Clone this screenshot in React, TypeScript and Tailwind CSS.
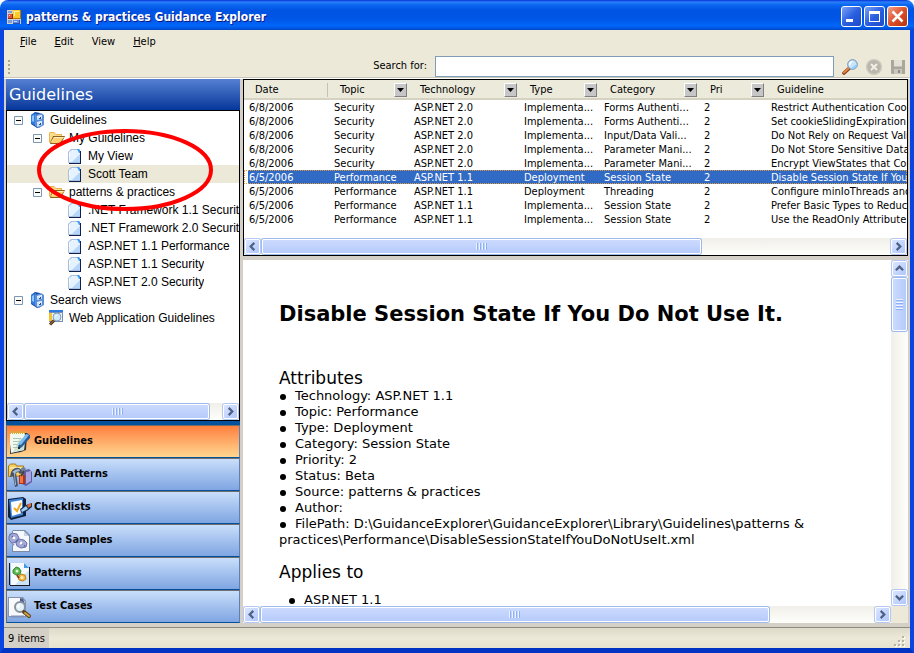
import { useState, type ReactNode } from 'react';
import clsx from 'clsx';

type IconProps = { className?: string };

function AppIcon() {
  return (
    <svg className="h-4 w-4" viewBox="0 0 16 16">
      <path fill="#d4d0c8" d="M0 1h14v14H0z" />
      <path fill="#8b2a1c" d="M1 5h5v5H1z" />
      <path fill="#e0533c" d="M1 5h4v4H1z" />
      <path fill="#ffd9cf" d="M2 6h1v1H2z" />
      <path fill="#7d9fd8" d="M1 2h4v2H1zM1 11h4v3H1z" />
      <path fill="#b97a00" d="M6 1h8v9H6z" />
      <path fill="#ffc928" d="M6 1h7v8H6z" />
      <path fill="#fff2a8" d="M7 2h5v1H7zM7 3h1v4H7z" />
      <path fill="#2b4fa8" d="M6 11h7v4H6z" />
      <path fill="#5c8cf0" d="M6 11h6v3H6z" />
      <path fill="#bcd3ff" d="M7 12h3v1H7z" />
    </svg>
  );
}

function CabinetIcon() {
  return (
    <svg className="h-4 w-4 shrink-0" viewBox="0 0 16 16">
      <path fill="#174a9e" d="M1 3 5 0l5 1v14l-3 1-6-4z" />
      <path fill="#2f7fe2" d="M1 3l5-2v13l-5-3z" />
      <path fill="#8cc6fb" d="M2 4l2-1v7l-2-1z" />
      <path fill="#5d8fd6" d="M5 3l6-2 3 2v10l-5 3-4-2z" />
      <path fill="#c9defa" d="M7 4l5-1v4L7 8zM7 10l5-1v4l-5 2z" />
      <path fill="#e9f3ff" d="M7 4l5-1v1L7 5zM7 10l5-1v1l-5 1z" />
      <path fill="#234f94" d="M9 5h2v2H9zM9 11h2v2H9z" />
      <path fill="#fff" d="M9 5h1v1H9zM9 11h1v1H9z" />
    </svg>
  );
}

function FolderIcon() {
  return (
    <svg className="h-4 w-4 shrink-0" viewBox="0 0 16 16">
      <path fill="#e9b64c" d="M0 3l1-1h4l2 2h6v3l-3 6H1l-1-1z" />
      <path fill="#f9dc8c" d="M1 3h4l2 2h5v2H4l-3 4z" />
      <path fill="#8d5f1b" d="M4 6h12l-4 8H1z" />
      <path fill="#fbd071" d="M5 7h10l-4 6H2z" />
      <path fill="#fff1bd" d="M5 7h10l-1 1H5l-2 4H2z" />
    </svg>
  );
}

function PageIcon() {
  return (
    <svg className="h-4 w-4 shrink-0" viewBox="0 0 16 16">
      <path fill="#12204f" d="M12 3h1v13H1v-1h11z" />
      <path fill="#a9bfe0" d="M3 1h7l2 2v12H0V4z" />
      <path fill="#e6f2ff" d="M4 2h6l2 2v10H1V4z" />
      <path fill="#b4d6fa" d="M12 6v8H4z" />
      <path fill="#3d9cf2" d="M9 1h2l1 1v3h-1z" />
      <path fill="#fff" d="M4 2h1v1H4zM1 5h1v4H1z" />
    </svg>
  );
}

function SearchViewIcon() {
  return (
    <svg className="h-4 w-4 shrink-0" viewBox="0 0 16 16">
      <path fill="#7790b8" d="M0 0h14v12H0z" />
      <path fill="#f4f4ee" d="M1 3h12v8H1z" />
      <path fill="#2d7be0" d="M0 0h14v2H0z" />
      <path fill="#f2c230" d="M0 3h3v8H0z" />
      <circle cx="8" cy="7" r="4" fill="#cfe9fb" stroke="#7f9fbf" />
      <path stroke="#fff" d="M6 6.500 8 5" />
      <path stroke="#3b2a18" strokeWidth="3" d="M5 10.500 1 14.500" />
      <path stroke="#d98c2f" strokeWidth="1" d="M5 10.500 1 14.500" />
    </svg>
  );
}

function MagnifierIcon() {
  return (
    <svg className="h-4 w-4" viewBox="0 0 16 16">
      <path stroke="#7a3b1c" strokeWidth="3.600" strokeLinecap="round" d="M7 9.500 2 14" />
      <path stroke="#e8833a" strokeWidth="2.200" strokeLinecap="round" d="M7 9 2 13.500" />
      <circle cx="10.500" cy="5.500" r="4.800" fill="#c6e4fb" stroke="#6d8db5" />
      <path fill="#fff" d="M7 5q0-3 5-3Q8 4 8 8z" />
      <path fill="none" stroke="#8fd0ff" strokeWidth="1.500" d="M14 6q-1 3-4 3" />
    </svg>
  );
}

function StopIcon() {
  return (
    <svg className="h-4 w-4" viewBox="0 0 16 16">
      <circle cx="8" cy="8" r="8" fill="#c9c6bc" />
      <circle cx="8" cy="8" r="6.500" fill="#b9b6ac" />
      <path stroke="#f1efe6" strokeWidth="2" d="m5 5 6 6M11 5l-6 6" />
    </svg>
  );
}

function SaveIcon() {
  return (
    <svg className="h-4 w-4" viewBox="0 0 16 16">
      <path fill="#aaa79d" d="M1 1h14v14H2l-1-1z" />
      <path fill="#e3e0d5" d="M4 1h8v7H4z" />
      <path fill="#c4c1b6" d="M4 7h8v1H4z" />
      <path fill="#c9c6bb" d="M4 10h8v5H4z" />
      <path fill="#8e8b82" d="M8 11h2v3H8z" />
    </svg>
  );
}

function NotepadIcon({ className }: IconProps) {
  return (
    <svg className={className} viewBox="0 0 24 24">
      <path fill="#2b3440" d="M2 3h17l-1 17-5 2-11 2z" />
      <path fill="#f3f8ee" d="M2 3h15l-1 17-13 3-1-9z" />
      <path fill="#cfe3d0" d="M12 8h5l-1 12-11 2z" />
      <path fill="#c9b22c" d="M2 1h1v3H2zM4 1h1v3H4zM6 1h1v3H6zM8 1h1v3H8zM10 1h1v3h-1zM12 1h1v3h-1zM14 1h1v3h-1zM16 1h1v3h-1z" />
      <path stroke="#a9c7b3" d="M5 8.500h8M5 11.500h7M5 14.500h5M5 17.500h5" />
      <path fill="#2d5c95" d="M19 3l3 2v3L14 17l-3 2-1-3z" />
      <path fill="#79bdf5" d="M18 4l3 1-8 10-3-1z" />
      <path fill="#1a2a45" d="M10 17h2v2h-2z" />
    </svg>
  );
}

function ToolsIcon({ className }: IconProps) {
  return (
    <svg className={className} viewBox="0 0 24 24">
      <path fill="#f5cf5f" stroke="#a87920" d="M.500 13.500V3l2-2h5l1 2h7v10z" />
      <path fill="#fae6a0" d="M2 4h12v2H2z" />
      <path fill="#5f5da8" d="m14 8 7-2 3 3v10l-6 4-4-2z" />
      <path fill="#a9a7e2" d="m18 9 5-1v10l-5 3z" />
      <path fill="#b33412" d="M11 12h6v9h-6z" />
      <path fill="#f7743c" d="M12 12h3v8h-3z" />
      <path fill="#45536b" d="M3 9q3-5 8-4l3 2v3l-2 1-2-2-2 1 2 13-3 1-2-11-3 1z" />
      <path fill="#a8bbd4" d="M4 9q3-3 7-3l1 2-4 1-1 3 1 10H7L6 10z" />
      <path fill="#6e7f99" d="m13 5 3-1 2 2-1 3-3 1z" />
      <path stroke="#48413a" strokeWidth="2" d="m16 8-3 5" />
    </svg>
  );
}

function ChecklistIcon({ className }: IconProps) {
  return (
    <svg className={className} viewBox="0 0 24 24">
      <path fill="#10213f" d="m0 3 15-2 3 2v17L3 24l-3-3z" />
      <path fill="#3c82d8" d="m1 4 14-2v17L3 22z" />
      <path fill="#fbfdff" d="m3 6 11-2v13L4 20z" />
      <path fill="none" stroke="#f2a91d" strokeWidth="2" d="m6 12 3 3 4-8" />
      <path fill="#20304c" d="m12 13 6-4 6-2v4l-5 4-6 2z" />
      <path fill="#9fd2fb" d="m13 14 5-4 2 3-6 3z" />
      <path fill="#e96a2e" d="m19 9 4-2v3l-3 2z" />
    </svg>
  );
}

function CodeIcon({ className }: IconProps) {
  return (
    <svg className={className} viewBox="0 0 24 24">
      <path fill="#7b8aa5" d="M5 1h12l5 5v17H4V3z" />
      <path fill="#f4f7fc" d="M5 2h11v5h5v15H5z" />
      <path fill="#c8d5e8" d="m16 2 5 5h-5z" />
      <path fill="#a3a9d6" stroke="#6b72ad" d="m1 7 3-3 5 1 2 4-2 4-5 1-3-3z" />
      <path fill="#a3a9d6" stroke="#6b72ad" d="m8 14 3-4 5 1 3 3-1 4-5 1-4-2z" />
      <path stroke="#585f9c" strokeWidth="2" strokeDasharray="1 2" d="m2 5 7 8M9 11l9 7" />
      <circle cx="6" cy="9" r="1.500" fill="#fff" />
      <circle cx="13" cy="14" r="1.500" fill="#fff" />
      <path fill="#8f96c9" d="m2 13 5 2-2 2z" />
    </svg>
  );
}

function PatternIcon({ className }: IconProps) {
  return (
    <svg className={className} viewBox="0 0 24 24">
      <path fill="#16181d" d="M1 1h1v22H1zM2 23h19V5h1v19H2z" />
      <path fill="#f5faff" d="M3 1h13l5 5v17H3z" />
      <path fill="#cbe2f8" d="M21 8v15H7z" />
      <path fill="#3f9ae8" d="m16 1 5 5h-5z" />
      <path fill="#5cb84e" stroke="#2f8e34" d="m5 8 3-3 3 1 2 3-1 3-4 1-3-2z" />
      <circle cx="9" cy="9" r="1.500" fill="#d9f5cf" />
      <path fill="#f0b845" stroke="#c4831c" d="m10 15 3-3 4 1 1 4-3 2-4-1z" />
      <circle cx="14" cy="15.500" r="1.500" fill="#fff0c0" />
      <path stroke="#8b3e1c" strokeWidth="2" d="m9 13 2 3" />
    </svg>
  );
}

function TestIcon({ className }: IconProps) {
  return (
    <svg className={className} viewBox="0 0 24 24">
      <path fill="#8593ab" d="M0 2h15l3 4v16H0z" />
      <path fill="#f7f9fd" d="M1 3h12l4 4v14H1z" />
      <path fill="#4a5f96" d="m12 3 3 1 2 5h-5z" />
      <path stroke="#7f93b8" strokeWidth="2" d="M3 21.500h13" />
      <circle cx="12" cy="12" r="5" fill="#e4f3fb" stroke="#8a929c" strokeWidth="2" />
      <path fill="#fff" d="M9 12q0-3 3-3-1 2-1 4z" />
      <path stroke="#5c4322" strokeWidth="4" strokeLinecap="round" d="m16 17 5 4" />
      <path stroke="#d3a344" strokeWidth="2" strokeLinecap="round" d="m17 18 4 3" />
    </svg>
  );
}

const chevrons = {
  left: 'M7 1 3 5l4 4',
  right: 'm3 1 4 4-4 4',
  up: 'm1 7 4-4 4 4',
  down: 'm1 3 4 4 4-4',
};

function ScrollButton({ dir }: { dir: keyof typeof chevrons }) {
  return (
    <button
      type="button"
      aria-label={`Scroll ${dir}`}
      className="flex h-[15px] w-[15px] shrink-0 items-center justify-center rounded-xs border border-white bg-linear-to-br from-[#dbe5fe] to-[#b0c7fb] shadow-[0_0_0_1px_#b4c8f6]"
    >
      <svg className="h-[9px] w-[9px]" viewBox="0 0 10 10" fill="none" stroke="#4d6185" strokeWidth="2.500">
        <path d={chevrons[dir]} />
      </svg>
    </button>
  );
}

function ScrollBar({ size, vertical }: { size: number; vertical?: boolean }) {
  return (
    <div
      className={clsx(
        'flex shrink-0 gap-[2px] p-px',
        vertical
          ? 'w-[17px] flex-col bg-linear-to-r from-[#f0efe9] to-[#fefefb]'
          : 'h-[17px] bg-linear-to-b from-[#f0efe9] to-[#fefefb]',
      )}
    >
      <ScrollButton dir={vertical ? 'up' : 'left'} />
      <div className={clsx('flex min-h-0 min-w-0 flex-1', vertical && 'flex-col')}>
        <div
          className={clsx(
            'flex items-center justify-center gap-px rounded-xs border border-white from-[#cbdafe] to-[#b7cbfb] shadow-[0_0_0_1px_#9db9ef]',
            vertical ? 'w-full flex-col bg-linear-to-r' : 'h-full bg-linear-to-b',
          )}
          style={vertical ? { height: `${size}%` } : { width: `${size}%` }}
        >
          {[0, 1, 2, 3].map((i) => (
            <span
              key={i}
              className={clsx('border-[#eef4fe] bg-[#8cb0f8]', vertical ? 'h-[2px] w-[7px] border-t' : 'h-[7px] w-[2px] border-l')}
            />
          ))}
        </div>
      </div>
      <ScrollButton dir={vertical ? 'down' : 'right'} />
    </div>
  );
}

type TreeNode = { label: string; depth: number; icon: () => ReactNode; open?: boolean };

const tree: TreeNode[] = [
  { label: 'Guidelines', depth: 0, icon: CabinetIcon, open: true },
  { label: 'My Guidelines', depth: 1, icon: FolderIcon, open: true },
  { label: 'My View', depth: 2, icon: PageIcon },
  { label: 'Scott Team', depth: 2, icon: PageIcon },
  { label: 'patterns & practices', depth: 1, icon: FolderIcon, open: true },
  { label: '.NET Framework 1.1 Security', depth: 2, icon: PageIcon },
  { label: '.NET Framework 2.0 Security', depth: 2, icon: PageIcon },
  { label: 'ASP.NET 1.1 Performance', depth: 2, icon: PageIcon },
  { label: 'ASP.NET 1.1 Security', depth: 2, icon: PageIcon },
  { label: 'ASP.NET 2.0 Security', depth: 2, icon: PageIcon },
  { label: 'Search views', depth: 0, icon: CabinetIcon, open: true },
  { label: 'Web Application Guidelines', depth: 1, icon: SearchViewIcon },
];

const indents = ['pl-[7px]', 'pl-[26px]', 'pl-[45px]'];

const sections = [
  { label: 'Guidelines', icon: NotepadIcon },
  { label: 'Anti Patterns', icon: ToolsIcon },
  { label: 'Checklists', icon: ChecklistIcon },
  { label: 'Code Samples', icon: CodeIcon },
  { label: 'Patterns', icon: PatternIcon },
  { label: 'Test Cases', icon: TestIcon },
];

const columns = [
  { label: 'Date', width: 'w-[84px]' },
  { label: 'Topic', width: 'w-[80px]', filter: true },
  { label: 'Technology', width: 'w-[110px]', filter: true },
  { label: 'Type', width: 'w-[80px]', filter: true },
  { label: 'Category', width: 'w-[100px]', filter: true },
  { label: 'Pri', width: 'w-[67px]', filter: true },
  { label: 'Guideline', width: '' },
];

const rows = [
  ['6/8/2006', 'Security', 'ASP.NET 2.0', 'Implementa...', 'Forms Authenti...', '2', 'Restrict Authentication Cookies'],
  ['6/8/2006', 'Security', 'ASP.NET 2.0', 'Implementa...', 'Forms Authenti...', '2', 'Set cookieSlidingExpiration to'],
  ['6/8/2006', 'Security', 'ASP.NET 2.0', 'Implementa...', 'Input/Data Vali...', '2', 'Do Not Rely on Request Validation'],
  ['6/8/2006', 'Security', 'ASP.NET 2.0', 'Implementa...', 'Parameter Mani...', '2', 'Do Not Store Sensitive Data'],
  ['6/8/2006', 'Security', 'ASP.NET 2.0', 'Implementa...', 'Parameter Mani...', '2', 'Encrypt ViewStates that Contain'],
  ['6/5/2006', 'Performance', 'ASP.NET 1.1', 'Deployment', 'Session State', '2', 'Disable Session State If You'],
  ['6/5/2006', 'Performance', 'ASP.NET 1.1', 'Deployment', 'Threading', '2', 'Configure minIoThreads and'],
  ['6/5/2006', 'Performance', 'ASP.NET 1.1', 'Implementa...', 'Session State', '2', 'Prefer Basic Types to Reduce'],
  ['6/5/2006', 'Performance', 'ASP.NET 1.1', 'Implementa...', 'Session State', '2', 'Use the ReadOnly Attribute'],
];

const attributes = [
  'Technology: ASP.NET 1.1',
  'Topic: Performance',
  'Type: Deployment',
  'Category: Session State',
  'Priority: 2',
  'Status: Beta',
  'Source: patterns & practices',
  'Author:',
  'FilePath: D:\\GuidanceExplorer\\GuidanceExplorer\\Library\\Guidelines\\patterns & practices\\Performance\\DisableSessionStateIfYouDoNotUseIt.xml',
];

function TitleBar() {
  const button = 'flex h-[21px] w-[21px] items-center justify-center rounded-[3px] border border-white';
  return (
    <header className="flex h-[30px] shrink-0 items-center rounded-t-lg bg-[linear-gradient(#0831d9_0px,#2a80f8_2px,#0a66f0_5px,#0054e3_10px,#0055e5_18px,#0066fb_26px,#0048c8_30px)] pt-[3px] pr-[6px] pl-[7px]">
      <AppIcon />
      <h1 className="ml-[3px] font-['DejaVu_Sans_Condensed','DejaVu_Sans',sans-serif] text-[12px] font-bold text-white [text-shadow:1px_1px_#0a1883]">
        patterns &amp; practices Guidance Explorer
      </h1>
      <div className="ml-auto flex gap-[2px]">
        <button type="button" aria-label="Minimize" className={clsx(button, 'bg-linear-to-br from-[#7ba2f5] via-[#2a5fe0] to-[#1c4bc9]')}>
          <svg className="h-[13px] w-[13px]" viewBox="0 0 13 13">
            <path fill="#fff" d="M1 9h7v3H1z" />
          </svg>
        </button>
        <button type="button" aria-label="Maximize" className={clsx(button, 'bg-linear-to-br from-[#7ba2f5] via-[#2a5fe0] to-[#1c4bc9]')}>
          <svg className="h-[13px] w-[13px]" viewBox="0 0 13 13">
            <path fill="#fff" fillRule="evenodd" d="M1 1h11v11H1zM2 4v7h9V4z" />
          </svg>
        </button>
        <button type="button" aria-label="Close" className={clsx(button, 'bg-linear-to-br from-[#f0a088] via-[#dd4f28] to-[#b8330d]')}>
          <svg className="h-[13px] w-[13px]" viewBox="0 0 13 13">
            <path stroke="#fff" strokeWidth="2.500" d="m1.500 1.500 10 10M11.500 1.500l-10 10" />
          </svg>
        </button>
      </div>
    </header>
  );
}

function Tree() {
  const [selected, setSelected] = useState('Scott Team');
  return (
    <div className="relative flex min-h-0 flex-1 flex-col border border-black bg-white">
      <ul className="min-h-0 flex-1 overflow-hidden font-['Liberation_Sans',Arial,sans-serif] text-[12px]">
        {tree.map(({ label, depth, icon: Icon, open }) => (
          <li
            key={label}
            onClick={() => setSelected(label)}
            className={clsx('flex h-[18px] items-center whitespace-nowrap', indents[depth], label === selected && 'bg-[#ece9d8]')}
          >
            <span className="mr-[7px] flex w-[9px] shrink-0">
              {open && (
                <svg className="h-[9px] w-[9px]" viewBox="0 0 9 9">
                  <path fill="#fbfaf6" stroke="#7898b5" d="M.5.5h8v8h-8z" />
                  <path fill="#000" d="M2 4h5v1H2z" />
                </svg>
              )}
            </span>
            <Icon />
            <span className="ml-1 min-w-0 overflow-hidden">{label}</span>
          </li>
        ))}
      </ul>
      <ScrollBar size={94} />
      <svg className="pointer-events-none absolute top-[17px] left-[29px] h-[84px] w-[178px]" viewBox="0 0 178 84">
        <ellipse cx="89" cy="42" rx="86" ry="39" fill="none" stroke="#f00" strokeWidth="4" />
      </svg>
    </div>
  );
}

function Sidebar() {
  const [active, setActive] = useState('Guidelines');
  return (
    <aside className="flex w-[234px] shrink-0 flex-col">
      <h2 className="flex h-[31px] shrink-0 items-center bg-linear-to-b from-[#5580d2] to-[#04369a] pl-[3px] font-['DejaVu_Sans',Verdana,sans-serif] text-[16px] text-white">
        {active}
      </h2>
      <Tree />
      <nav className="shrink-0 border-t-4 border-[#04509b]">
        {sections.map(({ label, icon: Icon }) => (
          <button
            key={label}
            type="button"
            onClick={() => setActive(label)}
            className={clsx(
              'flex h-[33px] w-full items-center gap-[2px] border border-t-[#6f6f6f] border-r-[#5f7fae] border-b-[#04509b] border-l-[#6f6f6f] bg-linear-to-b pl-px font-bold',
              label === active ? 'from-[#ff7f3c] to-[#ffd690]' : 'from-[#c9defa] to-[#7fa5e2]',
            )}
          >
            <Icon className="h-6 w-6" />
            {label}
          </button>
        ))}
      </nav>
    </aside>
  );
}

function GuidelineList() {
  const [selected, setSelected] = useState(5);
  return (
    <section className="flex h-[177px] shrink-0 flex-col border border-black bg-white">
      <div className="min-h-0 flex-1 overflow-hidden">
        <table className="w-full table-fixed border-separate border-spacing-0 text-left whitespace-nowrap">
          <thead>
            <tr>
              {columns.map((col, i) => (
                <th
                  key={col.label}
                  scope="col"
                  className={clsx('h-5 border-b-2 border-[#d6d2c2] bg-[#ebeadb] p-0 pt-[2px] font-normal', col.width)}
                >
                  <div className="flex items-center justify-between">
                    <span className={clsx('leading-[14px]', i === 0 ? 'pl-[11px]' : 'pl-3')}>{col.label}</span>
                    {i === 0 && <span className="h-[14px] w-px bg-[#c5c2b2]" />}
                    {col.filter && (
                      <button
                        type="button"
                        aria-label={`Filter ${col.label}`}
                        className="mr-px flex h-[14px] w-[13px] items-center justify-center border border-t-white border-r-[#808080] border-b-[#808080] border-l-white bg-[#c6c6c6]"
                      >
                        <svg className="h-1 w-[7px]" viewBox="0 0 7 4">
                          <path d="M0 0h7L3.500 4z" />
                        </svg>
                      </button>
                    )}
                  </div>
                </th>
              ))}
            </tr>
          </thead>
          <tbody>
            {rows.map((row, i) => (
              <tr
                key={i}
                onClick={() => setSelected(i)}
                className={clsx(i === selected && 'text-white outline -outline-offset-1 outline-dotted outline-[#e09a3a]')}
              >
                {row.map((cell, j) => (
                  <td
                    key={j}
                    className={clsx(
                      'h-[14px] overflow-hidden p-0 pt-px leading-[13px]',
                      j === 0 ? 'border-l-4 border-white pl-px' : 'pl-[6px]',
                      i === selected && 'bg-[#316ac5]',
                    )}
                  >
                    {cell}
                  </td>
                ))}
              </tr>
            ))}
          </tbody>
        </table>
      </div>
      <ScrollBar size={70} />
    </section>
  );
}

function Bullet() {
  return <span className="mr-[9px] ml-px inline-block h-[6px] w-[6px] rounded-full bg-black align-middle" />;
}

function Preview() {
  return (
    <section className="flex min-h-0 flex-1 bg-white">
      <div className="flex min-w-0 flex-1 flex-col">
        <article className="min-h-0 flex-1 overflow-hidden pt-10 pl-9 font-['DejaVu_Sans',Verdana,sans-serif] text-[13px] leading-4">
          <h2 className="text-[21px] leading-7 font-bold">Disable Session State If You Do Not Use It.</h2>
          <h3 className="mt-10 text-[17px] leading-5">Attributes</h3>
          <ul>
            {attributes.map((text) => (
              <li key={text}>
                <Bullet />
                {text}
              </li>
            ))}
          </ul>
          <h3 className="mt-[14px] text-[17px] leading-5">Applies to</h3>
          <ul className="mt-[10px] pl-[9px]">
            <li>
              <Bullet />
              ASP.NET 1.1
            </li>
          </ul>
        </article>
        <ScrollBar size={83} />
      </div>
      <div className="flex flex-col bg-[#ece9d8] pb-[17px]">
        <div className="flex min-h-0 flex-1">
          <ScrollBar size={17} vertical />
        </div>
      </div>
    </section>
  );
}

export default function App() {
  return (
    <div className="flex h-screen flex-col overflow-hidden bg-white font-['DejaVu_Sans_Condensed','DejaVu_Sans',Tahoma,sans-serif] text-[11px] text-black">
      <TitleBar />
      <div className="flex min-h-0 flex-1 flex-col border-x-4 border-b-[5px] border-x-[#0a45e2] border-b-[#0234c4] bg-[#ece9d8]">
        <nav className="flex h-[25px] shrink-0 items-center gap-[18px] pl-4">
          <button type="button"><u>F</u>ile</button>
          <button type="button"><u>E</u>dit</button>
          <button type="button">View</button>
          <button type="button"><u>H</u>elp</button>
        </nav>
        <div className="flex h-[23px] shrink-0 items-center border-b border-[#c9c6ba] pt-px pr-1 pl-1">
          <div className="flex flex-col gap-[2px]">
            {[0, 1, 2, 3].map((i) => (
              <span key={i} className="h-[2px] w-[2px] bg-[#a8a595]" />
            ))}
          </div>
          <label htmlFor="search" className="mr-2 ml-auto">
            Search for:
          </label>
          <input id="search" type="text" className="mr-2 h-[21px] w-[399px] border border-[#7f9db9] bg-white px-1" />
          <div className="flex gap-2">
            <button type="button" aria-label="Search"><MagnifierIcon /></button>
            <button type="button" aria-label="Stop" disabled><StopIcon /></button>
            <button type="button" aria-label="Save view" disabled><SaveIcon /></button>
          </div>
        </div>
        <main className="flex min-h-0 flex-1 gap-[3px] border-t border-white bg-[#d4d0c8] pr-[2px] pb-1 pl-[2px]">
          <Sidebar />
          <div className="flex min-w-0 flex-1 flex-col gap-1">
            <GuidelineList />
            <Preview />
          </div>
        </main>
        <footer className="flex h-[21px] shrink-0 items-center justify-between border-t border-[#8f8c80] bg-linear-to-b from-[#dedac9] via-[#ece9d8] to-[#e6e3d0] pr-1">
          <span className="flex h-full items-center bg-[#d4d0c8] px-1 pt-[2px]">9 items</span>
          <svg className="h-3 w-3 self-end" viewBox="0 0 12 12">
            <path fill="#fff" d="M9 1h2v2H9zM5 5h2v2H5zM9 5h2v2H9zM1 9h2v2H1zM5 9h2v2H5zM9 9h2v2H9z" />
            <path fill="#b8b4a3" d="M8 0h2v2H8zM4 4h2v2H4zM8 4h2v2H8zM0 8h2v2H0zM4 8h2v2H4zM8 8h2v2H8z" />
          </svg>
        </footer>
      </div>
    </div>
  );
}
